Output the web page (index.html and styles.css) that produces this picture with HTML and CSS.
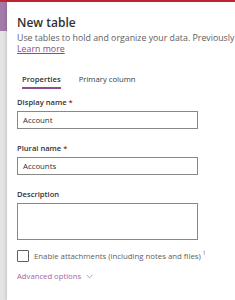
FILE: index.html
```html
<!DOCTYPE html>
<html lang="en">
<head>
<meta charset="utf-8">
<title>New table</title>
<link rel="stylesheet" href="styles.css">
</head>
<body>
<div class="topbar"></div>
<div class="main">
  <div class="rail"><div class="rail-top"></div></div>
  <div class="panel">
    <h1 class="title">New table</h1>
    <p class="intro">Use tables to hold and organize your data. Previously</p>
    <a class="learn" href="#">Learn more</a>
    <div class="tabs">
      <span class="tab active">Properties</span>
      <span class="tab">Primary column</span>
    </div>
    <div class="field first">
      <label class="label">Display name <span class="req">*</span></label>
      <div class="input">Account</div>
    </div>
    <div class="field">
      <label class="label">Plural name <span class="req">*</span></label>
      <div class="input">Accounts</div>
    </div>
    <div class="field">
      <label class="label">Description</label>
      <div class="textarea"></div>
    </div>
    <div class="check-row">
      <span class="checkbox"></span>
      <span class="check-label">Enable attachments (including notes and files)</span>
      <sup class="sup">1</sup>
    </div>
    <div class="advanced">
      <span>Advanced options</span>
      <svg class="chev" width="7" height="5" viewBox="0 0 7 5"><path d="M0.5 0.8 L3.5 3.8 L6.5 0.8" fill="none" stroke="#a77fae" stroke-width="0.8"/></svg>
    </div>
  </div>
</div>
</body>
</html>
```
FILE: styles.css
```css
html, body {
  margin: 0;
  padding: 0;
  width: 235px;
  height: 300px;
  overflow: hidden;
  background: #ffffff;
  font-family: "Open Sans", "Noto Sans", sans-serif;
  color: #323130;
}
.topbar {
  height: 2px;
  background: #c4262e;
}
.main {
  display: flex;
  height: 298px;
}
.rail {
  width: 7px;
  flex: none;
  background: #e4e4e4;
  display: flex;
  flex-direction: column;
}
.rail-top {
  height: 29px;
  background: #a37aa9;
}
.panel {
  flex: none;
  width: 228px;
  box-sizing: border-box;
  padding: 13px 0 0 10px;
  box-shadow: -1px 0 3px rgba(0,0,0,0.15);
  background: #fff;
}
.title {
  margin: 0;
  font-size: 12px;
  line-height: 16px;
  font-weight: 600;
  color: #323130;
}
.intro {
  margin: 2px 0 0;
  font-size: 8.8px;
  line-height: 11px;
  color: #605e5c;
  white-space: nowrap;
}
.learn {
  display: block;
  font-size: 8.8px;
  line-height: 11px;
  color: #8a4a8f;
  text-decoration: underline;
  width: max-content;
}
.tabs {
  display: flex;
  gap: 18px;
  margin-top: 19px;
  padding-left: 5px;
}
.tab {
  font-size: 7.7px;
  line-height: 11px;
  color: #3b3a39;
  padding-bottom: 2px;
  border-bottom: 2px solid transparent;
}
.tab.active {
  font-weight: 600;
  color: #323130;
  border-bottom-color: #8b4c92;
}
.field {
  margin-top: 14px;
}
.field.first {
  margin-top: 8px;
}
.label {
  display: block;
  font-size: 7.6px;
  line-height: 11px;
  font-weight: 600;
  color: #323130;
}
.req {
  color: #a4262c;
}
.input {
  box-sizing: border-box;
  margin-top: 3px;
  width: 181px;
  height: 18px;
  border: 1px solid #8a8886;
  padding: 0 5px;
  font-size: 7.8px;
  line-height: 16px;
  color: #323130;
}
.textarea {
  box-sizing: border-box;
  margin-top: 3px;
  width: 181px;
  height: 37px;
  border: 1px solid #8a8886;
}
.check-row {
  display: flex;
  align-items: center;
  margin-top: 10px;
  height: 12px;
}
.checkbox {
  box-sizing: border-box;
  width: 12px;
  height: 12px;
  border: 1px solid #605e5c;
  border-radius: 1px;
  flex: none;
}
.check-label {
  margin-left: 5px;
  font-size: 7.8px;
  line-height: 11px;
  color: #605e5c;
}
.sup {
  font-size: 5px;
  color: #605e5c;
  margin-left: 2px;
  align-self: flex-start;
  line-height: 6px;
}
.advanced {
  display: flex;
  align-items: center;
  gap: 5px;
  margin-top: 9px;
  font-size: 7.7px;
  line-height: 11px;
  color: #a066a6;
}
.chev {
  display: block;
}
```
